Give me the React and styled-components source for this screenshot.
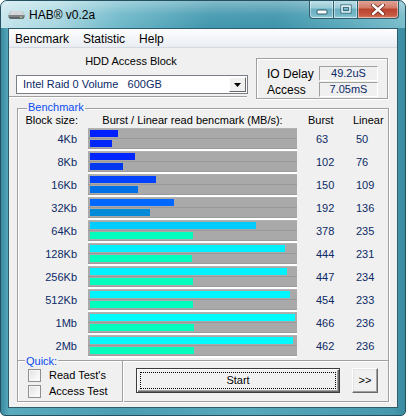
import React from 'react';
import styled, { createGlobalStyle } from 'styled-components';

const GlobalStyle = createGlobalStyle`
  html, body {
    margin: 0;
    padding: 0;
    background: #ffffff;
  }
  body {
    font-family: 'Liberation Sans', Arial, sans-serif;
    font-size: 11px;
  }
`;

const NAVY = '#0c2a66';
const LEGEND_BLUE = '#0a4cf0';
const SCALE = 0.44;

const rows = [
  { size: '4Kb', burst: 63, linear: 50, bc: '#0020ff', lc: '#0026f8' },
  { size: '8Kb', burst: 102, linear: 76, bc: '#0026ff', lc: '#0038f0' },
  { size: '16Kb', burst: 150, linear: 109, bc: '#0042ff', lc: '#0070e6' },
  { size: '32Kb', burst: 192, linear: 136, bc: '#0068ff', lc: '#008ad8' },
  { size: '64Kb', burst: 378, linear: 235, bc: '#00ccff', lc: '#00ffbf' },
  { size: '128Kb', burst: 444, linear: 231, bc: '#00f0ff', lc: '#00ffbf' },
  { size: '256Kb', burst: 447, linear: 234, bc: '#00f2ff', lc: '#00ffbf' },
  { size: '512Kb', burst: 454, linear: 233, bc: '#00f6ff', lc: '#00ffbf' },
  { size: '1Mb', burst: 466, linear: 236, bc: '#00fcff', lc: '#00ffbf' },
  { size: '2Mb', burst: 462, linear: 236, bc: '#00faff', lc: '#00ffbf' }
];

function DriveIcon() {
  return (
    <svg width="17" height="10" viewBox="0 0 17 10">
      <path d="M3 1 H14 L16.5 5 V7 Q16.5 9 14 9 H3 Q0.5 9 0.5 7 V5 Z" fill="#5f6569" />
      <path d="M3 1 H14 L16.5 5 H0.5 Z" fill="#d3d7da" />
      <path d="M1 6 H16" stroke="#9aa0a4" strokeWidth="1" />
      <circle cx="13" cy="7.3" r="0.9" fill="#b8e0a0" />
    </svg>
  );
}

function MinGlyph() {
  return (
    <svg width="12" height="6" viewBox="0 0 12 6">
      <rect x="1" y="1" width="10" height="4" rx="1" fill="#ffffff" stroke="#2d5f6e" />
    </svg>
  );
}

function MaxGlyph() {
  return (
    <svg width="12" height="10" viewBox="0 0 12 10">
      <rect x="1" y="1" width="10" height="8" fill="none" stroke="#2d5f6e" strokeWidth="1" />
      <rect x="2" y="2" width="8" height="6" fill="none" stroke="#ffffff" strokeWidth="1.2" />
      <rect x="3.5" y="3.5" width="5" height="3" fill="none" stroke="#2d5f6e" strokeWidth="0.8" />
    </svg>
  );
}

function CloseGlyph() {
  return (
    <svg width="14" height="11" viewBox="0 0 14 11">
      <path d="M2 1 L12 10 M12 1 L2 10" stroke="#6a2418" strokeWidth="4" strokeLinecap="round" />
      <path d="M2 1 L12 10 M12 1 L2 10" stroke="#ffffff" strokeWidth="2.4" strokeLinecap="round" />
    </svg>
  );
}

function App() {
  return (
    <>
      <GlobalStyle />
      <Window>
        <TitleBar>
          <AppIcon>
            <DriveIcon />
          </AppIcon>
          <Title>HAB® v0.2a</Title>
          <WindowButtons>
            <CaptionButton $kind="min">
              <MinGlyph />
            </CaptionButton>
            <CaptionButton $kind="max">
              <MaxGlyph />
            </CaptionButton>
            <CaptionButton $kind="close">
              <CloseGlyph />
            </CaptionButton>
          </WindowButtons>
        </TitleBar>

        <Client>
          <MenuBar>
            <MenuItem>Bencmark</MenuItem>
            <MenuItem>Statistic</MenuItem>
            <MenuItem>Help</MenuItem>
          </MenuBar>

          <TopSection>
            <DrivePanel>
              <PanelHeading>HDD Access Block</PanelHeading>
              <Combo>
                <ComboText>Intel Raid 0 Volume   600GB</ComboText>
                <ComboArrow>
                  <svg width="7" height="4" viewBox="0 0 7 4">
                    <path d="M0 0 H7 L3.5 4 Z" fill="#000" />
                  </svg>
                </ComboArrow>
              </Combo>
            </DrivePanel>

            <TimingBox>
              <TimingLabel>IO Delay</TimingLabel>
              <ValueBox>49.2uS</ValueBox>
              <TimingLabel>Access</TimingLabel>
              <ValueBox>7.05mS</ValueBox>
            </TimingBox>
          </TopSection>

          <BenchGroup>
            <Legend $left={9} $top={-8}>Benchmark</Legend>
            <BenchGrid>
              <HeadCell $align="right" $pad="0 10px 0 0">Block size:</HeadCell>
              <HeadCell $align="center">Burst / Linear read bencmark (MB/s):</HeadCell>
              <HeadCell $pad="0 0 0 11px">Burst</HeadCell>
              <HeadCell $pad="0 0 0 1px">Linear</HeadCell>

              {rows.map(row => (
                <React.Fragment key={row.size}>
                  <SizeLabel>{row.size}</SizeLabel>
                  <BarCell>
                    <Track>
                      <Bar $color={row.bc} style={{ width: Math.round(row.burst * SCALE) }} />
                      <Bar $color={row.lc} style={{ width: Math.round(row.linear * SCALE) }} />
                    </Track>
                  </BarCell>
                  <Value $pad={19}>{row.burst}</Value>
                  <Value $pad={4}>{row.linear}</Value>
                </React.Fragment>
              ))}
            </BenchGrid>
          </BenchGroup>

          <BottomRow>
            <QuickBox>
              <Legend $left={7} $top={-6}>Quick:</Legend>
              <CheckRow>
                <CheckBox />
                <span>Read Test's</span>
              </CheckRow>
              <CheckRow>
                <CheckBox />
                <span>Access Test</span>
              </CheckRow>
            </QuickBox>
            <ControlBox>
              <StartButton>Start</StartButton>
              <MoreButton>&gt;&gt;</MoreButton>
            </ControlBox>
          </BottomRow>
        </Client>
      </Window>
    </>
  );
}

const Window = styled.div`
  box-sizing: border-box;
  width: 406px;
  height: 416px;
  border: 1px solid #24505f;
  border-radius: 7px 7px 5px 5px;
  background: linear-gradient(
    90deg,
    #3a8aa0 0%,
    #5aaabd 2%,
    #4b9db2 30%,
    #58a8bb 60%,
    #4698ad 97%,
    #3a8aa0 100%
  );
  display: flex;
  flex-direction: column;
  overflow: hidden;
`;

const TitleBar = styled.div`
  height: 27px;
  flex: none;
  display: flex;
  align-items: center;
  background: linear-gradient(180deg, rgba(255, 255, 255, 0.35) 0%, rgba(255, 255, 255, 0.08) 50%, rgba(255, 255, 255, 0) 100%),
    linear-gradient(100deg, #c6e6ed 0%, #a9d7e1 14%, #6db8c9 30%, #4197ae 52%, #3e94ab 68%, #5aa9bc 85%, #79bccb 100%);
`;

const AppIcon = styled.div`
  display: flex;
  margin-left: 7px;
  width: 17px;
`;

const Title = styled.div`
  margin-left: 4px;
  font-size: 12px;
  line-height: 14px;
  color: #000;
`;

const WindowButtons = styled.div`
  margin-left: auto;
  margin-right: 6px;
  align-self: flex-start;
  display: flex;
  margin-top: -1px;
`;

const CaptionButton = styled.div`
  box-sizing: border-box;
  height: 19px;
  width: ${p => (p.$kind === 'close' ? '42px' : '25px')};
  display: flex;
  align-items: center;
  justify-content: center;
  border: 1px solid #2e5d6c;
  border-top: none;
  margin-left: -1px;
  border-radius: ${p => (p.$kind === 'min' ? '0 0 0 4px' : p.$kind === 'close' ? '0 0 4px 0' : '0')};
  box-shadow: inset 0 0 0 1px rgba(255, 255, 255, 0.45);
  background: ${p =>
    p.$kind === 'close'
      ? 'linear-gradient(180deg, #e3a89c 0%, #d27a68 45%, #b9412d 50%, #c65a42 85%, #d8826a 100%)'
      : 'linear-gradient(180deg, #c3e1e9 0%, #98cad6 45%, #6aafc1 50%, #77b9c9 85%, #a2d3de 100%)'};
  padding-top: ${p => (p.$kind === 'min' ? '5px' : '0')};
`;

const Client = styled.div`
  box-sizing: border-box;
  flex: 1;
  margin: 0 7px 7px;
  border: 1px solid #2f5c6b;
  background: #f0f0f0;
  display: flex;
  flex-direction: column;
  min-height: 0;
`;

const MenuBar = styled.div`
  box-sizing: border-box;
  height: 19px;
  flex: none;
  display: flex;
  align-items: center;
  gap: 14px;
  padding-left: 6px;
  padding-top: 1px;
  background: linear-gradient(180deg, #fdfdfe 0%, #f4f6f9 50%, #e9edf2 100%);
  border-bottom: 1px solid #d5dae2;
`;

const MenuItem = styled.span`
  font-size: 12px;
  line-height: 14px;
  color: #000;
`;

const TopSection = styled.div`
  display: flex;
  height: 52px;
  flex: none;
`;

const DrivePanel = styled.div`
  box-sizing: border-box;
  width: 238px;
  height: 49px;
  border-bottom: 1px solid #a0a0a0;
  box-shadow: 0 1px 0 #ffffff;
  padding-top: 7px;
  display: flex;
  flex-direction: column;
  align-items: center;
`;

const PanelHeading = styled.div`
  line-height: 13px;
  color: #000;
  margin-left: 6px;
`;

const Combo = styled.div`
  box-sizing: border-box;
  align-self: flex-start;
  margin-left: 7px;
  margin-top: 7px;
  width: 232px;
  height: 19px;
  border: 1px solid #7a7e86;
  background: #ffffff;
  display: flex;
  align-items: center;
`;

const ComboText = styled.span`
  flex: 1;
  padding-left: 6px;
  white-space: pre;
  color: ${NAVY};
  line-height: 13px;
`;

const ComboArrow = styled.div`
  box-sizing: border-box;
  width: 17px;
  height: 15px;
  margin-right: 1px;
  display: flex;
  align-items: center;
  justify-content: center;
  background: #f0f0f0;
  border-top: 1px solid #ffffff;
  border-left: 1px solid #ffffff;
  border-right: 1px solid #696969;
  border-bottom: 1px solid #696969;
`;

const etched = `
  border: 1px solid #a0a0a0;
  box-shadow: inset 1px 1px 0 #ffffff, 1px 1px 0 #ffffff;
`;

const TimingBox = styled.div`
  box-sizing: border-box;
  margin: 10px 0 0 9px;
  width: 132px;
  height: 41px;
  ${etched}
  padding: 7px 0 0 10px;
  display: grid;
  grid-template-columns: 52px 59px;
  grid-auto-rows: 15px;
  row-gap: 1px;
  align-items: center;
`;

const TimingLabel = styled.div`
  font-size: 12px;
  line-height: 14px;
  color: #000;
`;

const ValueBox = styled.div`
  box-sizing: border-box;
  height: 15px;
  border-top: 1px solid #a0a0a0;
  border-left: 1px solid #a0a0a0;
  border-right: 1px solid #ffffff;
  border-bottom: 1px solid #ffffff;
  text-align: center;
  line-height: 13px;
  color: ${NAVY};
`;

const BenchGroup = styled.div`
  position: relative;
  box-sizing: border-box;
  margin: 8px 8px 0 8px;
  height: 252px;
  flex: none;
  border: 1px solid #a0a0a0;
  border-bottom: none;
  box-shadow: inset 1px 1px 0 #ffffff, 1px 0 0 #ffffff;
`;

const Legend = styled.span`
  position: absolute;
  left: ${p => p.$left}px;
  top: ${p => p.$top}px;
  padding: 0 1px;
  background: #f0f0f0;
  color: ${LEGEND_BLUE};
  line-height: 13px;
`;

const BenchGrid = styled.div`
  display: grid;
  grid-template-columns: 70px 209px 55px 1fr;
  grid-template-rows: 19px;
  grid-auto-rows: 23px;
`;

const HeadCell = styled.div`
  padding: ${p => p.$pad || '0'};
  padding-top: 5px;
  text-align: ${p => p.$align || 'left'};
  line-height: 13px;
  color: #000;
  white-space: nowrap;
`;

const SizeLabel = styled.div`
  display: flex;
  align-items: center;
  justify-content: flex-end;
  padding-right: 11px;
  line-height: 13px;
  color: ${NAVY};
`;

const BarCell = styled.div`
  background: #ffffff;
  padding-bottom: 2px;
`;

const Track = styled.div`
  box-sizing: border-box;
  height: 21px;
  padding: 2px 2px 0;
  display: flex;
  flex-direction: column;
  gap: 3px;
  background: linear-gradient(
    180deg,
    #b2b2b2 0px,
    #b2b2b2 1px,
    #a9a9a9 1px,
    #a9a9a9 10px,
    #999999 10px,
    #999999 11px,
    #a9a9a9 11px,
    #a9a9a9 20px,
    #9c9c9c 20px
  );
`;

const Bar = styled.div`
  height: 7px;
  background: ${p => p.$color};
`;

const Value = styled.div`
  display: flex;
  align-items: center;
  padding-left: ${p => p.$pad}px;
  line-height: 13px;
  color: ${NAVY};
`;

const BottomRow = styled.div`
  display: flex;
  margin: 0 8px;
  height: 42px;
  flex: none;
`;

const QuickBox = styled.div`
  position: relative;
  box-sizing: border-box;
  width: 106px;
  ${etched}
  padding: 8px 0 0 10px;
  display: flex;
  flex-direction: column;
  gap: 3px;
`;

const CheckRow = styled.div`
  display: flex;
  align-items: center;
  gap: 8px;
  height: 13px;
  line-height: 13px;
  color: #000;
`;

const CheckBox = styled.div`
  box-sizing: border-box;
  width: 13px;
  height: 13px;
  flex: none;
  border: 1px solid #8e8f8f;
  background: linear-gradient(135deg, #dedede 0%, #f4f4f4 60%, #ffffff 100%);
  box-shadow: inset 0 0 0 1px #f7f7f7;
`;

const ControlBox = styled.div`
  box-sizing: border-box;
  flex: 1;
  border: 1px solid #a0a0a0;
  border-left: none;
  box-shadow: inset 0 1px 0 #ffffff, 1px 1px 0 #ffffff;
  padding: 7px 0 0 13px;
  display: flex;
  align-items: flex-start;
  gap: 12px;
`;

const StartButton = styled.div`
  box-sizing: border-box;
  width: 204px;
  height: 25px;
  border: 1px solid #3c3c3c;
  background: #f0f0f0;
  box-shadow: inset 1px 1px 0 #ffffff, inset -1px -1px 0 #696969, inset -2px -2px 0 #a0a0a0;
  outline: 1px dotted #000000;
  outline-offset: -5px;
  display: flex;
  align-items: center;
  justify-content: center;
  line-height: 13px;
  color: #000;
`;

const MoreButton = styled.div`
  box-sizing: border-box;
  width: 26px;
  height: 25px;
  border-top: 1px solid #ffffff;
  border-left: 1px solid #ffffff;
  border-right: 1px solid #696969;
  border-bottom: 1px solid #696969;
  box-shadow: inset -1px -1px 0 #a0a0a0, inset 1px 1px 0 #e3e3e3;
  background: #f0f0f0;
  display: flex;
  align-items: center;
  justify-content: center;
  line-height: 13px;
  color: #000;
`;

export default App;
